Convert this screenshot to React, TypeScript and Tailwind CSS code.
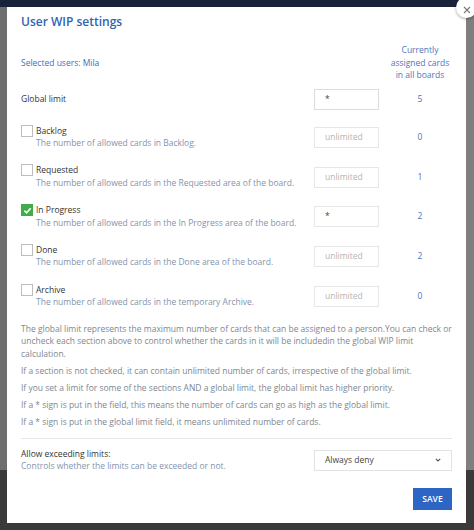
import React from "react";

const rows = [
  { name: "Backlog", desc: "The number of allowed cards in Backlog.", value: "", count: "0", checked: false },
  { name: "Requested", desc: "The number of allowed cards in the Requested area of the board.", value: "", count: "1", checked: false },
  { name: "In Progress", desc: "The number of allowed cards in the In Progress area of the board.", value: "*", count: "2", checked: true },
  { name: "Done", desc: "The number of allowed cards in the Done area of the board.", value: "", count: "2", checked: false },
  { name: "Archive", desc: "The number of allowed cards in the temporary Archive.", value: "", count: "0", checked: false },
];

function Checkbox({ checked }: { checked: boolean }) {
  if (checked) {
    return (
      <div className="w-[12px] h-[12px] bg-[#41ad49] flex items-center justify-center shrink-0">
        <svg width="9" height="9" viewBox="0 0 10 10">
          <path d="M1.5 5.2 L4 7.5 L8.5 2.5" stroke="white" strokeWidth="1.8" fill="none" />
        </svg>
      </div>
    );
  }
  return <div className="w-[12px] h-[12px] border border-[#bdbdbd] bg-white shrink-0" />;
}

export default function App() {
  return (
    <div
      className="relative w-[474px] h-[530px] overflow-hidden bg-[#7f7f7f]"
      style={{ fontFamily: '"Open Sans", "Noto Sans", sans-serif' }}
    >
      {/* backdrop */}
      <div className="absolute left-0 top-0 w-full h-[7px] bg-[#18223a]" />
      <div className="absolute left-0 top-[470px] w-full h-[60px] bg-[#3a3a3a]" />
      <div className="absolute left-0 top-[7px] w-[7px] h-[463px] bg-[#6e6e6e]" />

      {/* modal */}
      <div className="absolute left-[7px] top-[7px] w-[459px] h-[516px] bg-white px-[14px] pt-[6px] text-[8.5px] leading-[12.6px]">
        <div className="text-[12px] leading-[18px] font-semibold text-[#2f63b3]">User WIP settings</div>

        <div className="flex items-center mt-[13px]">
          <div className="flex-1 text-[#3d6fc2]">Selected users: Mila</div>
          <div className="w-[64px] text-center text-[#4d76bd]">
            Currently assigned cards in all boards
          </div>
        </div>

        <div className="flex items-center mt-[7px]">
          <div className="flex-1 font-medium text-[#333]">Global limit</div>
          <div className="w-[65px] h-[21px] border border-[#dcdcdc] px-[10px] flex items-center text-[#444]">*</div>
          <div className="w-[64px] ml-[9px] text-center text-[#4d76bd]">5</div>
        </div>

        <div className="flex flex-col gap-[14.5px] mt-[15px]">
          {rows.map((r) => (
            <div key={r.name} className="flex items-center">
              <div className="flex-1 flex gap-[3px]">
                <Checkbox checked={r.checked} />
                <div>
                  <div className="font-medium text-[#333]">{r.name}</div>
                  <div className="text-[#8494ab]">{r.desc}</div>
                </div>
              </div>
              <div className="w-[65px] h-[21px] border border-[#e6e6e6] px-[10px] flex items-center">
                {r.value ? (
                  <span className="text-[#444]">{r.value}</span>
                ) : (
                  <span className="text-[#b3b3b3]">unlimited</span>
                )}
              </div>
              <div className="w-[64px] ml-[9px] text-center text-[#4d76bd]">{r.count}</div>
            </div>
          ))}
        </div>

        <div className="mt-[14px] text-[#7e8791] flex flex-col gap-[4.5px]">
          <p>
            The global limit represents the maximum number of cards that can be assigned to a person.You can check or
            uncheck each section above to control whether the cards in it will be includedin the global WIP limit
            calculation.
          </p>
          <p>If a section is not checked, it can contain unlimited number of cards, irrespective of the global limit.</p>
          <p>If you set a limit for some of the sections AND a global limit, the global limit has higher priority.</p>
          <p>If a * sign is put in the field, this means the number of cards can go as high as the global limit.</p>
          <p>If a * sign is put in the global limit field, it means unlimited number of cards.</p>
        </div>

        <div className="h-px bg-[#e6e6e6] mt-[9px]" />

        <div className="flex items-center mt-[9px]">
          <div className="flex-1">
            <div className="font-medium text-[#333]">Allow exceeding limits:</div>
            <div className="text-[#8494ab]">Controls whether the limits can be exceeded or not.</div>
          </div>
          <div className="w-[138px] h-[21px] border border-[#e3e3e3] pl-[10px] pr-[10px] flex items-center justify-between text-[#444]">
            <span>Always deny</span>
            <svg width="6" height="4" viewBox="0 0 6 4">
              <path d="M0.8 0.8 L3 3 L5.2 0.8" stroke="#555" strokeWidth="1.1" fill="none" />
            </svg>
          </div>
        </div>

        <div className="flex justify-end mt-[15px]">
          <button className="w-[39px] h-[22px] bg-[#2c65c3] text-white font-semibold text-[8.5px] flex items-center justify-center">
            SAVE
          </button>
        </div>
      </div>

      {/* close button */}
      <div className="absolute left-[456px] top-[-3px] w-[21px] h-[21px] rounded-full bg-white shadow-[0_1px_3px_rgba(0,0,0,0.35)] flex items-center justify-center">
        <svg width="8" height="8" viewBox="0 0 8 8" className="mt-[4px]">
          <path d="M1 1 L7 7 M7 1 L1 7" stroke="#777" strokeWidth="1.1" />
        </svg>
      </div>
    </div>
  );
}
